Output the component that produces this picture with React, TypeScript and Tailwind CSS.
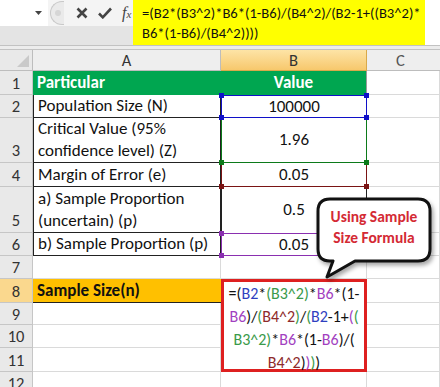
const F = {
  blue: "text-[#2f3fbf]",
  green: "text-[#3a9a4a]",
  purple: "text-[#a23fc0]",
  brown: "text-[#8e2b2b]",
  black: "text-[#111]",
};

type Tok = [string, string];

const formulaLines: Tok[][] = [
  [["=(", F.black], ["B2", F.blue], ["*", F.black], ["(B3^2)", F.green], ["*", F.black], ["B6", F.purple], ["*(1-", F.black]],
  [["B6", F.purple], [")/", F.black], ["(", F.green], ["B4^2", F.brown], [")", F.green], ["/", F.black], ["(", F.green], ["B2", F.blue], ["-1+", F.black], ["(", F.purple], ["(", F.green]],
  [["B3^2", F.green], [")", F.green], ["*", F.black], ["B6", F.purple], ["*(1-", F.black], ["B6", F.purple], [")/(", F.black]],
  [["B4^2", F.brown], [")", F.black], [")", F.purple], [")", F.green], [")", F.black]],
];

const Corners = ({ color }: { color: string }) => (
  <>
    <span className={`absolute -left-[3px] -top-[3px] w-[5px] h-[5px] ${color}`} />
    <span className={`absolute -right-[3px] -top-[3px] w-[5px] h-[5px] ${color}`} />
    <span className={`absolute -left-[3px] -bottom-[3px] w-[5px] h-[5px] ${color}`} />
    <span className={`absolute -right-[3px] -bottom-[3px] w-[5px] h-[5px] ${color}`} />
  </>
);

const RowNum = ({ n, hl }: { n: number; hl?: boolean }) => (
  <div
    className={`flex items-center justify-center border-r border-b border-[#c6c6c6] text-[#333] text-[16.5px] ${
      hl ? "bg-[#fad88e]" : "bg-[#e9e9e9]"
    }`}
  >
    {n}
  </div>
);

const TallNum = ({ n }: { n: number }) => (
  <div className="flex items-end justify-center pb-[1px] border-r border-b border-[#c6c6c6] text-[#333] text-[16.5px] bg-[#e9e9e9]">
    {n}
  </div>
);

const Empty = () => <div className="border-r border-b border-[#dadada]" />;

const App = () => {
  return (
    <div className="w-[440px] h-[387px] overflow-hidden bg-white relative font-[Carlito,Calibri,'Liberation_Sans',sans-serif] text-[17px] leading-[22px] text-[#111]">
      {/* formula bar */}
      <div className="flex h-[45px] bg-[#e4e4e4]">
        <div className="flex flex-col w-[133px]">
          <div className="flex h-[26px] bg-[#f4f4f4] items-center">
            <div className="w-[48px] h-full bg-white flex items-center justify-end pr-[6px]">
              <svg width="7" height="4" viewBox="0 0 7 4"><path d="M0 0h7L3.5 4z" fill="#444" /></svg>
            </div>
            <div className="w-[14px] h-[24px] rounded-l-full border border-r-0 border-[#c9c9c9] bg-[#eaeaea] ml-[2px] flex items-center justify-center">
              <span className="w-[6px] h-[6px] rounded-full bg-[#d6d6d6]" />
            </div>
            <div className="flex items-center gap-[10px] ml-[12px]">
              <svg width="12" height="12" viewBox="0 0 12 12"><path d="M1.5 1.5l9 9M10.5 1.5l-9 9" stroke="#444" strokeWidth="2.6" /></svg>
              <svg width="14" height="12" viewBox="0 0 14 12"><path d="M1 6.5l3.8 3.8L13 1.5" stroke="#444" strokeWidth="2.6" fill="none" /></svg>
              <span className="italic font-[Liberation_Serif,serif] text-[16px] text-[#444]">
                f<span className="text-[11px]">x</span>
              </span>
            </div>
          </div>
        </div>
        <div className="w-[292px] bg-[#ffff00] pl-[9px] pt-[3px] leading-[20px] text-[14.6px] text-[#111] whitespace-nowrap">
          =(B2*(B3^2)*B6*(1-B6)/(B4^2)/(B2-1+((B3^2)*
          <br />
          B6*(1-B6)/(B4^2))))
        </div>
        <div className="flex-1 bg-white" />
      </div>
      <div className="h-[5px] border-t border-b border-[#c2c2c2] bg-[#ececec]" />

      {/* sheet */}
      <div className="grid grid-cols-[33px_188px_146px_1fr] grid-rows-[21px_24px_23px_45px_24px_46px_23px_23px_24px_22px_23px_24px_23px]">
        {/* header */}
        <div className="bg-[#e9e9e9] border-r border-b border-[#bdbdbd] relative">
          <svg className="absolute right-[3px] bottom-[3px]" width="12" height="12" viewBox="0 0 12 12"><path d="M12 0V12H0z" fill="#c9c9c9" /></svg>
        </div>
        <div className="bg-[#eeeeee] border-r border-b border-[#bdbdbd] flex items-center justify-center text-[#333] text-[16.5px]">A</div>
        <div className="bg-gradient-to-b from-[#fde4a6] to-[#f7c86c] border-r border-b border-[#d9a94a] flex items-center justify-center text-[#333] text-[16.5px]">B</div>
        <div className="bg-[#eeeeee] border-b border-[#bdbdbd] flex items-center pl-[29px] text-[#555] text-[16.5px]">C</div>

        {/* row 1 */}
        <RowNum n={1} />
        <div className="bg-[#00a650] text-white font-bold pl-[4px] flex items-center">Particular</div>
        <div className="bg-[#00a650] text-white font-bold flex items-center justify-center border-r border-[#9a9a9a]">Value</div>
        <Empty />

        {/* row 2 */}
        <RowNum n={2} />
        <div className="border border-[#222] border-t-0 pl-[4px] flex items-center">Population Size (N)</div>
        <div className="relative border border-[#1010c8] flex items-center justify-center z-[2]">
          100000
          <Corners color="bg-[#1010c8]" />
        </div>
        <Empty />

        {/* row 3 */}
        <TallNum n={3} />
        <div className="border border-[#222] border-t-0 pl-[4px] flex flex-col justify-center">
          <span>Critical Value (95%</span>
          <span>confidence level) (Z)</span>
        </div>
        <div className="relative border border-[#0c7a1a] border-t-0 flex items-center justify-center z-[1]">
          1.96
          <Corners color="bg-[#0c7a1a]" />
        </div>
        <Empty />

        {/* row 4 */}
        <RowNum n={4} />
        <div className="border border-[#222] border-t-0 pl-[4px] flex items-center">Margin of Error (e)</div>
        <div className="relative border border-[#7a1414] border-t-0 flex items-center justify-center">
          0.05
          <Corners color="bg-[#7a1414]" />
        </div>
        <Empty />

        {/* row 5 */}
        <TallNum n={5} />
        <div className="border border-[#222] border-t-0 pl-[4px] flex flex-col justify-center">
          <span>a) Sample Proportion</span>
          <span>(uncertain) (p)</span>
        </div>
        <div className="border-l border-r border-[#222] flex items-center justify-center">0.5</div>
        <Empty />

        {/* row 6 */}
        <RowNum n={6} />
        <div className="border border-[#222] border-t-0 pl-[4px] flex items-center">b) Sample Proportion (p)</div>
        <div className="relative border border-[#8a2fb0] flex items-center justify-center">
          0.05
          <Corners color="bg-[#8a2fb0]" />
        </div>
        <Empty />

        {/* row 7 */}
        <RowNum n={7} />
        <Empty />
        <Empty />
        <Empty />

        {/* row 8 */}
        <RowNum n={8} hl />
        <div className="bg-[#ffc000] font-bold pl-[4px] flex items-center border-b border-[#222]">Sample Size(n)</div>
        <div className="row-span-4 border-[3px] border-[#de2020] flex flex-col items-center leading-[23px] text-[16px]">
          {formulaLines.map((line, i) => (
            <div key={i} className="whitespace-nowrap">
              {line.map(([t, c], j) => (
                <span key={j} className={c}>
                  {t}
                </span>
              ))}
            </div>
          ))}
        </div>
        <Empty />

        {/* rows 9-12 */}
        <RowNum n={9} />
        <Empty />
        <Empty />
        <RowNum n={10} />
        <Empty />
        <Empty />
        <RowNum n={11} />
        <Empty />
        <Empty />
        <RowNum n={12} />
        <Empty />
        <Empty />
        <Empty />
      </div>

      {/* callout */}
      <div className="absolute left-[310px] top-[190px] w-[130px] h-[95px]">
        <svg width="130" height="95" viewBox="0 0 130 95" className="absolute inset-0 drop-shadow-[2px_3px_2px_rgba(0,0,0,0.35)]">
          <path
            d="M21 9H108Q120 9 120 21V59Q120 71 108 71H45L17 87L23 71H20Q8 71 8 59V21Q8 9 20 9Z"
            fill="white"
            stroke="#111"
            strokeWidth="3"
            strokeLinejoin="round"
          />
        </svg>
        <div className="absolute left-[8px] top-[16px] w-[112px] flex flex-col items-center text-[#d42a34] font-bold leading-[21px] text-[15.5px]">
          <span>Using Sample</span>
          <span>Size Formula</span>
        </div>
      </div>
    </div>
  );
};

export default App;
